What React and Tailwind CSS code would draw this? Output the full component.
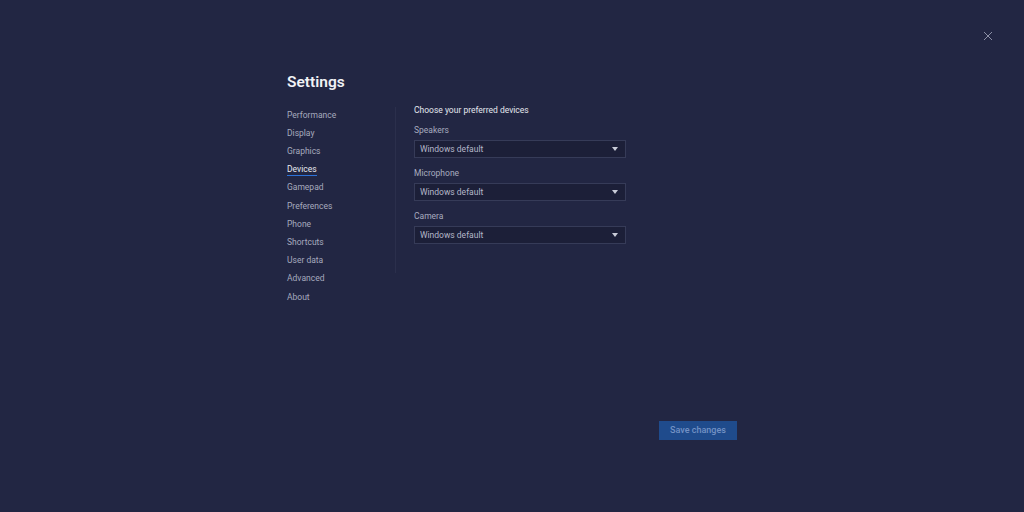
import React, { useState } from 'react';

const navItems = ['Performance', 'Display', 'Graphics', 'Devices', 'Gamepad', 'Preferences', 'Phone', 'Shortcuts', 'User data', 'Advanced', 'About'];

const DeviceSelect = ({ label }) => (
  <div className="mt-[9px]">
    <div className="text-[8.5px] leading-[12px] text-[#a7abbf]">{label}</div>
    <button className="mt-[4px] w-[212px] h-[18px] flex items-center justify-between pl-[5px] pr-[7px] bg-[#1c1f38] border border-[#363b58] text-[8.5px] text-[#b4b7c8]">
      <span>Windows default</span>
      <svg width="6" height="4" viewBox="0 0 6 4"><path d="M0 0h6L3 4z" fill="#c9ccd8" /></svg>
    </button>
  </div>
);

export default function App() {
  const [active, setActive] = useState('Devices');

  return (
    <div className="relative w-full h-[512px] bg-[#222643] overflow-hidden" style={{ fontFamily: 'Roboto, "Liberation Sans", sans-serif' }}>
      <button className="absolute right-[31px] top-[31px] text-[#8c90a6]">
        <svg width="10" height="10" viewBox="0 0 10 10" stroke="currentColor" strokeWidth="1"><path d="M1 1l8 8M9 1l-8 8" /></svg>
      </button>

      <div className="w-[450px] mx-auto pt-[72px]">
        <h1 className="text-[15.5px] font-semibold text-[#f1f2f6] leading-[20px]">Settings</h1>

        <div className="flex items-start mt-[13px]">
          <nav className="w-[108px] shrink-0 mt-[1px] flex flex-col">
            {navItems.map((item) => (
              <button
                key={item}
                onClick={() => setActive(item)}
                className="h-[18.2px] shrink-0 text-left text-[8.5px] flex items-center"
              >
                <span className={active === item ? 'text-[#e8e9ef] border-b border-[#2d72d8] leading-[11px]' : 'text-[#a6aabe]'}>{item}</span>
              </button>
            ))}
          </nav>

          <div className="w-px h-[166px] mt-[2px] bg-[#2b2f4c] shrink-0"></div>

          <div className="pl-[18px] flex-1">
            <div className="text-[8.5px] leading-[10px] text-[#e4e6ee]">Choose your preferred devices</div>
            <DeviceSelect label="Speakers" />
            <DeviceSelect label="Microphone" />
            <DeviceSelect label="Camera" />
          </div>
        </div>

        <div className="flex justify-end mt-[115px]">
          <button className="w-[78px] h-[19px] bg-[#1f4b8c] text-[9px] font-medium text-[#7392c4]">Save changes</button>
        </div>
      </div>
    </div>
  );
}
